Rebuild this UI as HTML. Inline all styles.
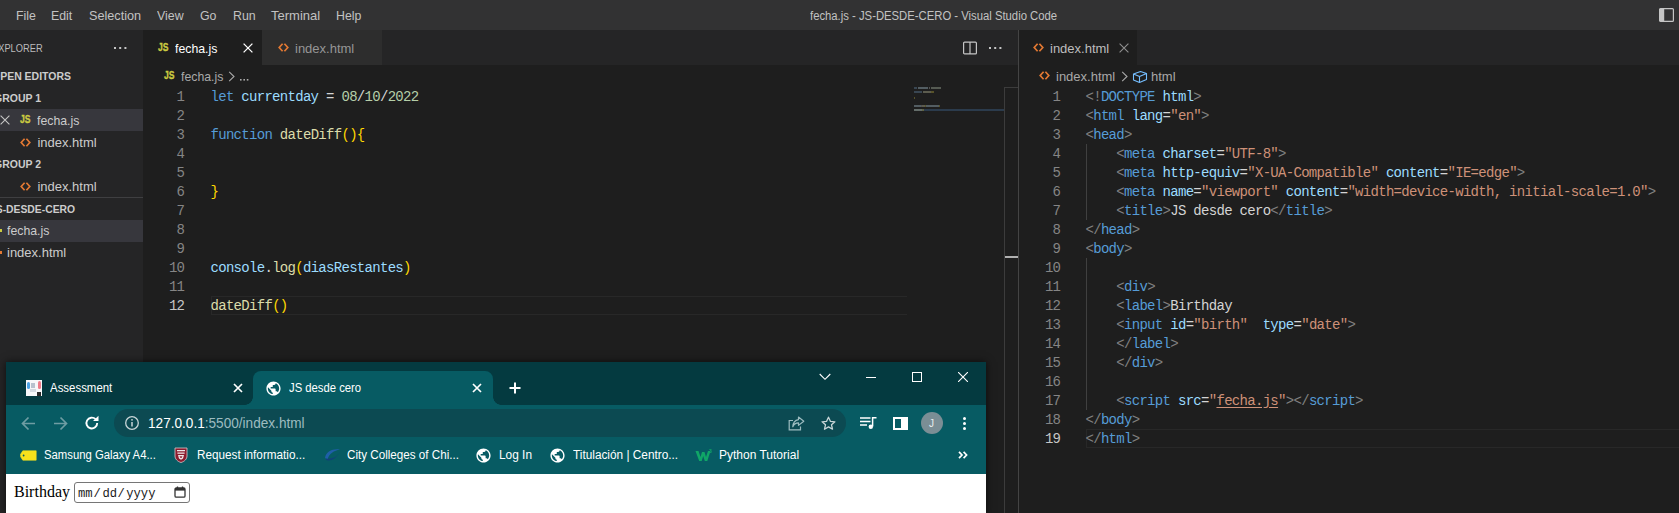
<!DOCTYPE html>
<html lang="en">
<head>
<meta charset="UTF-8">
<title>fecha.js - JS-DESDE-CERO - Visual Studio Code</title>
<style>
*{box-sizing:border-box;margin:0;padding:0}
html,body{width:1679px;height:513px;overflow:hidden;background:#1e1e1e;font-family:"Liberation Sans",sans-serif}
body{position:relative;font-family:"Liberation Sans",sans-serif;font-size:13px;color:#ccc}
.abs{position:absolute}
.t{position:absolute;white-space:nowrap;line-height:1}
/* title bar */
#titlebar{left:0;top:0;width:1679px;height:30px;background:#323233}
#titlebar .m{top:9px;font-size:13px;color:#c2c2c2}
/* sidebar */
#sidebar{left:0;top:30px;width:143px;height:483px;background:#252526;overflow:hidden}
/* editor chrome */
.tabstrip{background:#252526;height:35px;top:30px}
.tab{top:0;height:35px}
.code{font-family:"Liberation Mono",monospace;font-size:14px;letter-spacing:-0.7px;margin-top:1px;margin-left:-0.5px;white-space:pre;line-height:19px;height:19px;position:absolute}
.ln{font-family:"Liberation Mono",monospace;font-size:14px;letter-spacing:-0.7px;margin-top:1px;padding-right:0.7px;line-height:19px;height:19px;position:absolute;text-align:right;color:#858585}
.sh{font-size:11px;font-weight:bold;color:#cccccc}
.fl{font-size:13px;color:#cccccc}
.jsi{font-size:9.5px;font-weight:bold;color:#cbcb41;letter-spacing:-0.3px}
.hti{font-size:11px;font-weight:bold;color:#e37933;letter-spacing:-1.5px}
.ln.cur{color:#c6c6c6}
.kw{color:#569cd6}.vr{color:#9cdcfe}.fn{color:#dcdcaa}.nm{color:#b5cea8}.br{color:#ffd700}.wh{color:#d4d4d4}
.tg{color:#808080}.st{color:#ce9178}
</style>
</head>
<body>

<!-- ===== TITLE BAR ===== -->
<div id="titlebar" class="abs">
  <span class="t" style="left:16px;top:8.5px;font-size:13px;color:#c2c2c2;transform:scaleX(0.95);transform-origin:0 50%;">File</span>
  <span class="t" style="left:51px;top:8.5px;font-size:13px;color:#c2c2c2;transform:scaleX(0.95);transform-origin:0 50%;">Edit</span>
  <span class="t" style="left:89px;top:8.5px;font-size:13px;color:#c2c2c2;transform:scaleX(0.975);transform-origin:0 50%;">Selection</span>
  <span class="t" style="left:157px;top:8.5px;font-size:13px;color:#c2c2c2;transform:scaleX(0.95);transform-origin:0 50%;">View</span>
  <span class="t" style="left:200px;top:8.5px;font-size:13px;color:#c2c2c2;transform:scaleX(0.95);transform-origin:0 50%;">Go</span>
  <span class="t" style="left:233px;top:8.5px;font-size:13px;color:#c2c2c2;transform:scaleX(0.95);transform-origin:0 50%;">Run</span>
  <span class="t" style="left:271px;top:8.5px;font-size:13px;color:#c2c2c2;">Terminal</span>
  <span class="t" style="left:336px;top:8.5px;font-size:13px;color:#c2c2c2;transform:scaleX(0.95);transform-origin:0 50%;">Help</span>
  <span class="t" style="left:810px;top:10.0px;font-size:12px;color:#c2c2c2;transform:scaleX(0.941);transform-origin:0 50%;">fecha.js - JS-DESDE-CERO - Visual Studio Code</span>
  <svg class="abs" style="left:1659px;top:8px" width="15" height="14" viewBox="0 0 15 14"><rect x="0.6" y="0.6" width="13.8" height="12.8" rx="1" fill="none" stroke="#c5c5c5" stroke-width="1.2"/><rect x="0.6" y="0.6" width="4.6" height="12.8" fill="#c5c5c5"/></svg>
</div><!--/titlebar-->

<!-- ===== SIDEBAR ===== -->
<div id="sidebar" class="abs">
  <span class="t" style="left:-7.6px;top:13.0px;font-size:11px;color:#bbbbbb;transform:scaleX(0.845);transform-origin:0 50%;">EXPLORER</span>
  <svg class="abs" style="left:114px;top:16px" width="14" height="4" viewBox="0 0 14 4"><rect x="0" y="1" width="2" height="2" fill="#c5c5c5"/><rect x="5.2" y="1" width="2" height="2" fill="#c5c5c5"/><rect x="10.4" y="1" width="2" height="2" fill="#c5c5c5"/></svg>
  <span class="t" style="left:-8px;top:41.0px;font-size:11px;color:#cccccc;transform:scaleX(0.953);transform-origin:0 50%;font-weight:bold;">OPEN EDITORS</span>
  <span class="t" style="left:-6px;top:63.0px;font-size:11px;color:#cccccc;transform:scaleX(0.953);transform-origin:0 50%;font-weight:bold;">GROUP 1</span>
  <div class="abs" style="left:0;top:79px;width:143px;height:22px;background:#37373d"></div>
  <svg class="abs" style="left:0px;top:85px" width="10" height="10" viewBox="0 0 10 10"><path d="M0.6 0.6 L9.4 9.4 M9.4 0.6 L0.6 9.4" stroke="#c5c5c5" stroke-width="1.1" fill="none"/></svg>
  <span class="t" style="left:19.5px;top:84px;font-size:11px;font-weight:bold;color:#cbcb41;-webkit-text-stroke:0.35px #cbcb41;transform:scaleX(.78);transform-origin:0 50%">JS</span>
  <span class="t" style="left:37.4px;top:84.0px;font-size:13px;color:#cccccc;transform:scaleX(0.945);transform-origin:0 50%;">fecha.js</span>
  <svg class="abs" style="left:19.5px;top:107.5px" width="11" height="9" viewBox="0 0 11 9"><path d="M4.6 0.7 L1.2 4.5 L4.6 8.3 M6.4 0.7 L9.8 4.5 L6.4 8.3" stroke="#e37933" stroke-width="1.7" fill="none"/></svg>
  <span class="t" style="left:37.4px;top:106.0px;font-size:13px;color:#cccccc;">index.html</span>
  <span class="t" style="left:-6px;top:129.0px;font-size:11px;color:#cccccc;transform:scaleX(0.953);transform-origin:0 50%;font-weight:bold;">GROUP 2</span>
  <svg class="abs" style="left:19.5px;top:151.5px" width="11" height="9" viewBox="0 0 11 9"><path d="M4.6 0.7 L1.2 4.5 L4.6 8.3 M6.4 0.7 L9.8 4.5 L6.4 8.3" stroke="#e37933" stroke-width="1.7" fill="none"/></svg>
  <span class="t" style="left:37.4px;top:150.0px;font-size:13px;color:#cccccc;">index.html</span>
  <div class="abs" style="left:0;top:167px;width:143px;height:1px;background:#3f3f41"></div>
  <span class="t" style="left:-10px;top:174.0px;font-size:11px;color:#cccccc;transform:scaleX(0.94);transform-origin:0 50%;font-weight:bold;">JS-DESDE-CERO</span>
  <div class="abs" style="left:0;top:190px;width:143px;height:22px;background:#37373d"></div>
  <div class="abs" style="left:0;top:199px;width:1.5px;height:3px;background:#cbcb41"></div>
  <span class="t" style="left:7px;top:194.0px;font-size:13px;color:#cccccc;transform:scaleX(0.945);transform-origin:0 50%;">fecha.js</span>
  <div class="abs" style="left:0;top:221px;width:1.5px;height:3px;background:#e37933"></div>
  <span class="t" style="left:7px;top:216.0px;font-size:13px;color:#cccccc;">index.html</span>
</div><!--/sidebar-->

<!-- ===== LEFT EDITOR GROUP ===== -->
<div id="left" class="abs" style="left:143px;top:30px;width:875px;height:483px;background:#1e1e1e">
  <div class="abs tabstrip" style="left:0;top:0;width:876px"></div>
  <div class="abs tab" style="left:0;width:119px;background:#1e1e1e"></div>
  <div class="abs tab" style="left:119px;width:120px;background:#2d2d2d"></div>
  <span class="t" style="left:15px;top:12px;font-size:11px;font-weight:bold;color:#cbcb41;-webkit-text-stroke:0.35px #cbcb41;transform:scaleX(.78);transform-origin:0 50%">JS</span>
  <span class="t" style="left:32px;top:12.0px;font-size:13px;color:#ffffff;transform:scaleX(0.945);transform-origin:0 50%;">fecha.js</span>
  <svg class="abs" style="left:100px;top:13px" width="10" height="10" viewBox="0 0 10 10"><path d="M0.6 0.6 L9.4 9.4 M9.4 0.6 L0.6 9.4" stroke="#ffffff" stroke-width="1.3" fill="none"/></svg>
  <svg class="abs" style="left:135px;top:13.0px" width="11" height="9" viewBox="0 0 11 9"><path d="M4.6 0.7 L1.2 4.5 L4.6 8.3 M6.4 0.7 L9.8 4.5 L6.4 8.3" stroke="#e37933" stroke-width="1.7" fill="none"/></svg>
  <span class="t" style="left:152px;top:12.0px;font-size:13px;color:#969696;">index.html</span>
  <svg class="abs" style="left:819px;top:10px" width="16" height="16" viewBox="0 0 16 16"><rect x="1.6" y="2.1" width="12.8" height="11.8" rx="1" fill="none" stroke="#c5c5c5" stroke-width="1.2"/><path d="M8 2 V14" stroke="#c5c5c5" stroke-width="1.2"/></svg>
  <svg class="abs" style="left:845.5px;top:16px" width="14" height="4" viewBox="0 0 14 4"><rect x="0" y="1" width="2" height="2" fill="#c5c5c5"/><rect x="5.2" y="1" width="2" height="2" fill="#c5c5c5"/><rect x="10.4" y="1" width="2" height="2" fill="#c5c5c5"/></svg>
  <span class="t" style="left:21px;top:40px;font-size:11px;font-weight:bold;color:#cbcb41;-webkit-text-stroke:0.35px #cbcb41;transform:scaleX(.78);transform-origin:0 50%">JS</span>
  <span class="t" style="left:38px;top:40.0px;font-size:13px;color:#a9a9a9;transform:scaleX(0.945);transform-origin:0 50%;">fecha.js</span>
  <svg class="abs" style="left:85px;top:40.5px" width="8" height="11" viewBox="0 0 8 11"><path d="M1.2 0.8 L6 5.5 L1.2 10.2" stroke="#a9a9a9" stroke-width="1.1" fill="none"/></svg>
  <svg class="abs" style="left:97px;top:48px" width="14" height="4" viewBox="0 0 14 4"><rect x="0" y="1" width="1.6" height="1.6" fill="#a9a9a9"/><rect x="3.4" y="1" width="1.6" height="1.6" fill="#a9a9a9"/><rect x="6.8" y="1" width="1.6" height="1.6" fill="#a9a9a9"/></svg>
  <div class="abs" style="left:68px;top:266px;width:696px;height:19px;border:1px solid #282828;border-right:none"></div>
  <span class="ln" style="left:0;width:42px;top:57px">1</span>
  <span class="code" style="left:68px;top:57px"><span class="kw">let</span> <span class="vr">currentday</span> <span class="wh">=</span> <span class="nm">08</span><span class="wh">/</span><span class="nm">10</span><span class="wh">/</span><span class="nm">2022</span></span>
  <span class="ln" style="left:0;width:42px;top:76px">2</span>
  <span class="ln" style="left:0;width:42px;top:95px">3</span>
  <span class="code" style="left:68px;top:95px"><span class="kw">function</span> <span class="fn">dateDiff</span><span class="br">(){</span></span>
  <span class="ln" style="left:0;width:42px;top:114px">4</span>
  <span class="ln" style="left:0;width:42px;top:133px">5</span>
  <span class="ln" style="left:0;width:42px;top:152px">6</span>
  <span class="code" style="left:68px;top:152px"><span class="br">}</span></span>
  <span class="ln" style="left:0;width:42px;top:171px">7</span>
  <span class="ln" style="left:0;width:42px;top:190px">8</span>
  <span class="ln" style="left:0;width:42px;top:209px">9</span>
  <span class="ln" style="left:0;width:42px;top:228px">10</span>
  <span class="code" style="left:68px;top:228px"><span class="vr">console</span><span class="wh">.</span><span class="fn">log</span><span class="br">(</span><span class="vr">diasRestantes</span><span class="br">)</span></span>
  <span class="ln" style="left:0;width:42px;top:247px">11</span>
  <span class="ln cur" style="left:0;width:42px;top:266px">12</span>
  <span class="code" style="left:68px;top:266px"><span class="fn">dateDiff</span><span class="br">()</span></span>
  <div class="abs" style="left:771px;top:79px;width:90px;height:2px;background:#2b3b4c"></div>
  <div class="abs" style="left:771px;top:57.3px;width:3px;height:1.3px;background:#5f7f9a;opacity:.42"></div>
  <div class="abs" style="left:775px;top:57.3px;width:10px;height:1.3px;background:#9db4c2;opacity:.42"></div>
  <div class="abs" style="left:786px;top:57.3px;width:1px;height:1.3px;background:#9a9a9a;opacity:.42"></div>
  <div class="abs" style="left:788px;top:57.3px;width:10px;height:1.3px;background:#a3ad9c;opacity:.42"></div>
  <div class="abs" style="left:771px;top:61.3px;width:8px;height:1.3px;background:#5f7f9a;opacity:.42"></div>
  <div class="abs" style="left:780px;top:61.3px;width:8px;height:1.3px;background:#b3b394;opacity:.42"></div>
  <div class="abs" style="left:788px;top:61.3px;width:3px;height:1.3px;background:#a89a3a;opacity:.42"></div>
  <div class="abs" style="left:771px;top:67.3px;width:1px;height:1.3px;background:#a89a3a;opacity:.42"></div>
  <div class="abs" style="left:771px;top:75.3px;width:7px;height:1.3px;background:#9db4c2;opacity:.42"></div>
  <div class="abs" style="left:778px;top:75.3px;width:1px;height:1.3px;background:#9a9a9a;opacity:.42"></div>
  <div class="abs" style="left:779px;top:75.3px;width:3px;height:1.3px;background:#b3b394;opacity:.42"></div>
  <div class="abs" style="left:782px;top:75.3px;width:1px;height:1.3px;background:#a89a3a;opacity:.42"></div>
  <div class="abs" style="left:783px;top:75.3px;width:13px;height:1.3px;background:#9db4c2;opacity:.42"></div>
  <div class="abs" style="left:796px;top:75.3px;width:1px;height:1.3px;background:#a89a3a;opacity:.42"></div>
  <div class="abs" style="left:771px;top:79.3px;width:8px;height:1.3px;background:#b3b394;opacity:.42"></div>
  <div class="abs" style="left:779px;top:79.3px;width:2px;height:1.3px;background:#a89a3a;opacity:.42"></div>
  <div class="abs" style="left:861px;top:57px;width:14px;height:426px;border-left:1px solid #3c3c3c;border-top:1px solid #3c3c3c"></div>
  <div class="abs" style="left:862px;top:226px;width:13px;height:2px;background:#b0b0b0"></div>
</div><!--/left-->

<!-- ===== RIGHT EDITOR GROUP ===== -->
<div id="right" class="abs" style="left:1018px;top:30px;width:661px;height:483px;background:#1e1e1e;border-left:1px solid #444">
  <div class="abs tabstrip" style="left:0;top:0;width:660px"></div>
  <div class="abs tab" style="left:0;width:118px;background:#1e1e1e"></div>
  <svg class="abs" style="left:14px;top:13.0px" width="11" height="9" viewBox="0 0 11 9"><path d="M4.6 0.7 L1.2 4.5 L4.6 8.3 M6.4 0.7 L9.8 4.5 L6.4 8.3" stroke="#e37933" stroke-width="1.7" fill="none"/></svg>
  <span class="t" style="left:31px;top:12.0px;font-size:13px;color:#bdbdbd;">index.html</span>
  <svg class="abs" style="left:99.5px;top:13.200000000000003px" width="10" height="10" viewBox="0 0 10 10"><path d="M0.6 0.6 L9.4 9.4 M9.4 0.6 L0.6 9.4" stroke="#8f8f8f" stroke-width="1.1" fill="none"/></svg>
  <svg class="abs" style="left:20px;top:41.0px" width="11" height="9" viewBox="0 0 11 9"><path d="M4.6 0.7 L1.2 4.5 L4.6 8.3 M6.4 0.7 L9.8 4.5 L6.4 8.3" stroke="#e37933" stroke-width="1.7" fill="none"/></svg>
  <span class="t" style="left:37px;top:40.0px;font-size:13px;color:#a9a9a9;">index.html</span>
  <svg class="abs" style="left:101.5px;top:40.5px" width="8" height="11" viewBox="0 0 8 11"><path d="M1.2 0.8 L6 5.5 L1.2 10.2" stroke="#a9a9a9" stroke-width="1.1" fill="none"/></svg>
  <svg class="abs" style="left:113px;top:38.5px" width="16" height="16" viewBox="0 0 16 16"><path d="M1.5 5 L8.5 2.5 L14.5 4.5 L14.5 10.5 L7.5 13.5 L1.5 11 Z M1.5 5 L7.5 7.5 L14.5 4.5 M7.5 7.5 V13.5" fill="none" stroke="#75beff" stroke-width="1.1" stroke-linejoin="round"/></svg>
  <span class="t" style="left:132px;top:40.0px;font-size:13px;color:#a9a9a9;">html</span>
  <div class="abs" style="left:67px;top:114px;width:1px;height:76px;background:#404040"></div>
  <div class="abs" style="left:67px;top:228px;width:1px;height:152px;background:#404040"></div>
  <div class="abs" style="left:67px;top:399px;width:593px;height:19px;border:1px solid #282828;border-right:none"></div>
  <span class="ln" style="left:0;width:42px;top:57px">1</span>
  <span class="code" style="left:67px;top:57px"><span class="tg">&lt;!</span><span class="kw">DOCTYPE</span> <span class="vr">html</span><span class="tg">&gt;</span></span>
  <span class="ln" style="left:0;width:42px;top:76px">2</span>
  <span class="code" style="left:67px;top:76px"><span class="tg">&lt;</span><span class="kw">html</span> <span class="vr">lang</span><span class="wh">=</span><span class="st">"en"</span><span class="tg">&gt;</span></span>
  <span class="ln" style="left:0;width:42px;top:95px">3</span>
  <span class="code" style="left:67px;top:95px"><span class="tg">&lt;</span><span class="kw">head</span><span class="tg">&gt;</span></span>
  <span class="ln" style="left:0;width:42px;top:114px">4</span>
  <span class="code" style="left:67px;top:114px">    <span class="tg">&lt;</span><span class="kw">meta</span> <span class="vr">charset</span><span class="wh">=</span><span class="st">"UTF-8"</span><span class="tg">&gt;</span></span>
  <span class="ln" style="left:0;width:42px;top:133px">5</span>
  <span class="code" style="left:67px;top:133px">    <span class="tg">&lt;</span><span class="kw">meta</span> <span class="vr">http-equiv</span><span class="wh">=</span><span class="st">"X-UA-Compatible"</span> <span class="vr">content</span><span class="wh">=</span><span class="st">"IE=edge"</span><span class="tg">&gt;</span></span>
  <span class="ln" style="left:0;width:42px;top:152px">6</span>
  <span class="code" style="left:67px;top:152px">    <span class="tg">&lt;</span><span class="kw">meta</span> <span class="vr">name</span><span class="wh">=</span><span class="st">"viewport"</span> <span class="vr">content</span><span class="wh">=</span><span class="st">"width=device-width, initial-scale=1.0"</span><span class="tg">&gt;</span></span>
  <span class="ln" style="left:0;width:42px;top:171px">7</span>
  <span class="code" style="left:67px;top:171px">    <span class="tg">&lt;</span><span class="kw">title</span><span class="tg">&gt;</span><span class="wh">JS desde cero</span><span class="tg">&lt;/</span><span class="kw">title</span><span class="tg">&gt;</span></span>
  <span class="ln" style="left:0;width:42px;top:190px">8</span>
  <span class="code" style="left:67px;top:190px"><span class="tg">&lt;/</span><span class="kw">head</span><span class="tg">&gt;</span></span>
  <span class="ln" style="left:0;width:42px;top:209px">9</span>
  <span class="code" style="left:67px;top:209px"><span class="tg">&lt;</span><span class="kw">body</span><span class="tg">&gt;</span></span>
  <span class="ln" style="left:0;width:42px;top:228px">10</span>
  <span class="ln" style="left:0;width:42px;top:247px">11</span>
  <span class="code" style="left:67px;top:247px">    <span class="tg">&lt;</span><span class="kw">div</span><span class="tg">&gt;</span></span>
  <span class="ln" style="left:0;width:42px;top:266px">12</span>
  <span class="code" style="left:67px;top:266px">    <span class="tg">&lt;</span><span class="kw">label</span><span class="tg">&gt;</span><span class="wh">Birthday</span></span>
  <span class="ln" style="left:0;width:42px;top:285px">13</span>
  <span class="code" style="left:67px;top:285px">    <span class="tg">&lt;</span><span class="kw">input</span> <span class="vr">id</span><span class="wh">=</span><span class="st">"birth"</span>  <span class="vr">type</span><span class="wh">=</span><span class="st">"date"</span><span class="tg">&gt;</span></span>
  <span class="ln" style="left:0;width:42px;top:304px">14</span>
  <span class="code" style="left:67px;top:304px">    <span class="tg">&lt;/</span><span class="kw">label</span><span class="tg">&gt;</span></span>
  <span class="ln" style="left:0;width:42px;top:323px">15</span>
  <span class="code" style="left:67px;top:323px">    <span class="tg">&lt;/</span><span class="kw">div</span><span class="tg">&gt;</span></span>
  <span class="ln" style="left:0;width:42px;top:342px">16</span>
  <span class="ln" style="left:0;width:42px;top:361px">17</span>
  <span class="code" style="left:67px;top:361px">    <span class="tg">&lt;</span><span class="kw">script</span> <span class="vr">src</span><span class="wh">=</span><span class="st">"<span style="text-decoration:underline;text-underline-offset:2px">fecha.js</span>"</span><span class="tg">&gt;</span><span class="tg">&lt;/</span><span class="kw">script</span><span class="tg">&gt;</span></span>
  <span class="ln" style="left:0;width:42px;top:380px">18</span>
  <span class="code" style="left:67px;top:380px"><span class="tg">&lt;/</span><span class="kw">body</span><span class="tg">&gt;</span></span>
  <span class="ln cur" style="left:0;width:42px;top:399px">19</span>
  <span class="code" style="left:67px;top:399px"><span class="tg">&lt;/</span><span class="kw">html</span><span class="tg">&gt;</span></span>
</div><!--/right-->

<!-- ===== CHROME WINDOW ===== -->
<div id="chrome" class="abs" style="left:6px;top:362px;width:980px;height:151px;background:#043a40;box-shadow:0 0 8px rgba(0,0,0,.65)">
  <div class="abs" style="left:0;top:43px;width:980px;height:69px;background:#075b63"></div>
  <div class="abs" style="left:247px;top:9px;width:240px;height:34px;background:#075b63;border-radius:8px 8px 0 0"></div>
  <div class="abs" style="left:239px;top:35px;width:8px;height:8px;background:radial-gradient(circle at 0 0,#043a40 7.5px,#075b63 8px)"></div>
  <div class="abs" style="left:487px;top:35px;width:8px;height:8px;background:radial-gradient(circle at 100% 0,#043a40 7.5px,#075b63 8px)"></div>
  <div class="abs" style="left:20px;top:18px;width:16px;height:16px;background:#f7f8fa;overflow:hidden"><div class="abs" style="left:1px;top:2px;width:3px;height:7px;background:#4aa3e6;border-radius:1.5px"></div><div class="abs" style="left:5px;top:3px;width:4px;height:5px;background:#b9c3cf"></div><div class="abs" style="left:4px;top:9px;width:6px;height:3px;background:#d5dbe2"></div><div class="abs" style="left:12px;top:1px;width:3px;height:8px;background:#ef7d8a;border-radius:1.5px"></div><div class="abs" style="left:11px;top:12px;width:4px;height:4px;background:#2a2a2a"></div></div>
  <span class="t" style="left:44px;top:19.5px;font-size:12px;color:#fff;transform:scaleX(0.953);transform-origin:0 50%;">Assessment</span>
  <svg class="abs" style="left:227px;top:21px" width="10" height="10" viewBox="0 0 10 10"><path d="M1 1 L9 9 M9 1 L1 9" stroke="#fff" stroke-width="1.7" fill="none"/></svg>
  <svg class="abs" style="left:258.5px;top:17.5px" width="17" height="17" viewBox="0 0 24 24"><path fill="#fff" d="M12 2C6.48 2 2 6.48 2 12s4.480 10 10 10 10-4.480 10-10S17.520 2 12 2zm-1 17.930c-3.950-.490-7-3.850-7-7.930 0-.620.080-1.210.210-1.790L9 15v1c0 1.100.900 2 2 2v1.930zm6.900-2.540c-.260-.810-1-1.390-1.900-1.390h-1v-3c0-.550-.450-1-1-1H8v-2h2c.550 0 1-.450 1-1V7h2c1.100 0 2-.900 2-2v-.410c2.930 1.190 5 4.060 5 7.410 0 2.080-.800 3.970-2.100 5.390z"/></svg>
  <span class="t" style="left:283px;top:19.5px;font-size:12px;color:#fff;transform:scaleX(0.94);transform-origin:0 50%;">JS desde cero</span>
  <svg class="abs" style="left:466px;top:21px" width="10" height="10" viewBox="0 0 10 10"><path d="M1 1 L9 9 M9 1 L1 9" stroke="#fff" stroke-width="1.7" fill="none"/></svg>
  <svg class="abs" style="left:503px;top:20px" width="12" height="12" viewBox="0 0 12 12"><path d="M6 0.5 V11.5 M0.5 6 H11.5" stroke="#fff" stroke-width="2" fill="none"/></svg>
  <svg class="abs" style="left:813px;top:11px" width="12" height="8" viewBox="0 0 12 8"><path d="M0.7 1 L6 6.3 L11.3 1" stroke="#fff" stroke-width="1.1" fill="none"/></svg>
  <div class="abs" style="left:860px;top:15px;width:10px;height:1px;background:#fff"></div>
  <div class="abs" style="left:906px;top:10px;width:10px;height:10px;border:1px solid #fff"></div>
  <svg class="abs" style="left:952px;top:10px" width="10" height="10" viewBox="0 0 10 10"><path d="M0 0 L10 10 M10 0 L0 10" stroke="#fff" stroke-width="1.1" fill="none"/></svg>
  <svg class="abs" style="left:15px;top:54px" width="15" height="15" viewBox="0 0 15 15"><path d="M14 7.5 H2 M7.5 1.5 L1.5 7.5 L7.5 13.5" stroke="#6f9da3" stroke-width="1.7" fill="none"/></svg>
  <svg class="abs" style="left:47px;top:54px;transform:scaleX(-1)" width="15" height="15" viewBox="0 0 15 15"><path d="M14 7.5 H2 M7.5 1.5 L1.5 7.5 L7.5 13.5" stroke="#6f9da3" stroke-width="1.7" fill="none"/></svg>
  <svg class="abs" style="left:78px;top:53px" width="16" height="16" viewBox="0 0 16 16"><path d="M13.2 8 A5.4 5.4 0 1 1 11.6 4.2" stroke="#fff" stroke-width="1.9" fill="none"/><path d="M9 6 H14.5 V0.8 Z" fill="#fff"/></svg>
  <div class="abs" style="left:108px;top:47px;width:732px;height:28px;border-radius:14px;background:#0c4a52"></div>
  <svg class="abs" style="left:118px;top:53px" width="16" height="16" viewBox="0 0 16 16"><circle cx="8" cy="8" r="6.3" stroke="#c8d6d8" stroke-width="1.3" fill="none"/><path d="M8 7 V11.5" stroke="#c8d6d8" stroke-width="1.5"/><circle cx="8" cy="4.8" r="0.9" fill="#c8d6d8"/></svg>
  <span class="t" style="left:142px;top:53.5px;font-size:14px;color:#fff;transform:scaleX(0.972);transform-origin:0 50%;">127.0.0.1<span style="color:#9dbcc0">:5500/index.html</span></span>
  <svg class="abs" style="left:782px;top:54px" width="17" height="15" viewBox="0 0 17 15"><path d="M5 4.5 H1.2 V13.8 H12.5 V10.5" stroke="#9dbcc0" stroke-width="1.2" fill="none"/><path d="M10.5 1 L15.8 5.2 L10.5 9.4 V6.8 C7.5 6.8 5.8 8 4.8 10.8 C5 7 7 4.2 10.5 3.6 Z" stroke="#9dbcc0" stroke-width="1.2" fill="none" stroke-linejoin="round"/></svg>
  <svg class="abs" style="left:815px;top:54px" width="15" height="14" viewBox="0 0 15 14"><path d="M7.5 1.2 L9.4 5.3 L13.9 5.8 L10.5 8.8 L11.5 13.2 L7.5 10.9 L3.5 13.2 L4.5 8.8 L1.1 5.8 L5.6 5.3 Z" stroke="#c8d6d8" stroke-width="1.3" fill="none" stroke-linejoin="round"/></svg>
  <svg class="abs" style="left:854px;top:55px" width="17" height="13" viewBox="0 0 17 13"><path d="M0 1 H10.5 M0 4.5 H10.5 M0 8 H7" stroke="#fff" stroke-width="1.5"/><path d="M12.6 9.5 V0.8 H16.5" stroke="#fff" stroke-width="1.5" fill="none"/><circle cx="10.8" cy="9.8" r="2.2" fill="#fff"/></svg>
  <div class="abs" style="left:887px;top:55px;width:15px;height:13px;border:2px solid #fff"><div class="abs" style="right:0;top:0;width:5px;height:9px;background:#fff"></div></div>
  <div class="abs" style="left:915px;top:50px;width:22px;height:22px;border-radius:11px;background:#7b8e95"></div>
  <span class="t" style="left:923px;top:56.5px;font-size:10px;color:#e8eef0;transform:scaleX(1);transform-origin:0 50%;">J</span>
  <div class="abs" style="left:957px;top:55.3px;width:2.6px;height:2.6px;border-radius:2px;background:#fff"></div>
  <div class="abs" style="left:957px;top:60.3px;width:2.6px;height:2.6px;border-radius:2px;background:#fff"></div>
  <div class="abs" style="left:957px;top:65.3px;width:2.6px;height:2.6px;border-radius:2px;background:#fff"></div>
  <svg class="abs" style="left:14px;top:88px" width="17" height="11" viewBox="0 0 17 11"><path d="M0.6 4.2 L2.8 0.8 H16.2 V10.2 H2.8 L0.6 6.8 Z" fill="#f7e21c" stroke="#f7e21c" stroke-width="0.6" stroke-linejoin="round"/><circle cx="3.6" cy="5.5" r="0.9" fill="#075b63"/></svg>
  <span class="t" style="left:38px;top:86.5px;font-size:12px;color:#fff;transform:scaleX(0.942);transform-origin:0 50%;">Samsung Galaxy A4...</span>
  <svg class="abs" style="left:168px;top:85px" width="14" height="16" viewBox="0 0 14 16"><path d="M1 1 H13 V9 C13 12 10.5 14.5 7 15.5 C3.5 14.5 1 12 1 9 Z" fill="#8c1d2f" stroke="#d9c8cb" stroke-width="0.8"/><path d="M3 3.6 H11 M3.4 6.2 H10.6" stroke="#efe6e7" stroke-width="1.3" fill="none"/><path d="M4 8 H10 L9 11.5 L7 12.8 L5 11.5 Z" fill="#efe6e7"/><path d="M6 9 L7 11 L8 9" stroke="#8c1d2f" stroke-width="0.9" fill="none"/></svg>
  <span class="t" style="left:191px;top:86.5px;font-size:12px;color:#fff;transform:scaleX(0.978);transform-origin:0 50%;">Request informatio...</span>
  <svg class="abs" style="left:318px;top:85px" width="17" height="16" viewBox="0 0 17 16"><path d="M1 11 C2 5 8 1.5 16 2.5 C10 3.5 5 6.5 3.5 12.5 Z" fill="#1f5fa8"/><path d="M2 13 C6 14.5 12 12 15.5 5.5 C13 10 8 12.5 2 11.5 Z" fill="#123f7a"/></svg>
  <span class="t" style="left:341px;top:86.5px;font-size:12px;color:#fff;transform:scaleX(0.97);transform-origin:0 50%;">City Colleges of Chi...</span>
  <svg class="abs" style="left:468.5px;top:84.5px" width="17" height="17" viewBox="0 0 24 24"><path fill="#fff" d="M12 2C6.48 2 2 6.48 2 12s4.480 10 10 10 10-4.480 10-10S17.520 2 12 2zm-1 17.930c-3.950-.490-7-3.850-7-7.930 0-.620.080-1.210.210-1.790L9 15v1c0 1.100.900 2 2 2v1.930zm6.900-2.540c-.260-.810-1-1.390-1.900-1.390h-1v-3c0-.550-.450-1-1-1H8v-2h2c.550 0 1-.450 1-1V7h2c1.100 0 2-.900 2-2v-.410c2.930 1.190 5 4.060 5 7.410 0 2.080-.800 3.970-2.100 5.390z"/></svg>
  <span class="t" style="left:493px;top:86.5px;font-size:12px;color:#fff;transform:scaleX(0.99);transform-origin:0 50%;">Log In</span>
  <svg class="abs" style="left:542.5px;top:84.5px" width="17" height="17" viewBox="0 0 24 24"><path fill="#fff" d="M12 2C6.48 2 2 6.48 2 12s4.480 10 10 10 10-4.480 10-10S17.520 2 12 2zm-1 17.930c-3.950-.490-7-3.850-7-7.930 0-.620.080-1.210.210-1.790L9 15v1c0 1.100.900 2 2 2v1.930zm6.900-2.540c-.260-.810-1-1.390-1.900-1.390h-1v-3c0-.550-.450-1-1-1H8v-2h2c.550 0 1-.450 1-1V7h2c1.100 0 2-.900 2-2v-.410c2.930 1.190 5 4.060 5 7.410 0 2.080-.800 3.970-2.100 5.390z"/></svg>
  <span class="t" style="left:567px;top:86.5px;font-size:12px;color:#fff;transform:scaleX(0.985);transform-origin:0 50%;">Titulación | Centro...</span>
  <svg class="abs" style="left:689px;top:86px" width="18" height="14" viewBox="0 0 18 14"><path d="M0.5 3 H3.5 L5.5 9 L7 4 H9.5 L11 9 L13 3 H15.5 L12.3 13 H9.8 L8.2 8 L6.7 13 H4.2 Z" fill="#10a567"/><text x="14" y="4.5" font-size="5" font-family="Liberation Sans" font-weight="bold" fill="#10a567">3</text></svg>
  <span class="t" style="left:713px;top:86.5px;font-size:12px;color:#fff;transform:scaleX(1.0);transform-origin:0 50%;">Python Tutorial</span>
  <svg class="abs" style="left:952px;top:89px" width="10" height="8" viewBox="0 0 10 8"><path d="M1 0.8 L4 4 L1 7.2 M5.6 0.8 L8.6 4 L5.6 7.2" stroke="#fff" stroke-width="1.7" fill="none"/></svg>
  <div class="abs" style="left:0;top:112px;width:980px;height:39px;background:#fff"></div>
  <span class="t" style="left:8px;top:120px;font-family:'Liberation Serif',serif;font-size:16px;color:#000;line-height:19px">Birthday</span>
  <div class="abs" style="left:68px;top:120px;width:116px;height:21px;border:1px solid #767676;border-radius:3px;background:#fff"></div>
  <span class="t" style="left:72px;top:125px;font-family:'Liberation Mono',monospace;font-size:12.2px;color:#1a1a1a;line-height:14px">mm</span>
  <span class="t" style="left:87.6px;top:125px;font-family:'Liberation Mono',monospace;font-size:12.2px;color:#1a1a1a;line-height:14px">/</span>
  <span class="t" style="left:96.4px;top:125px;font-family:'Liberation Mono',monospace;font-size:12.2px;color:#1a1a1a;line-height:14px">dd</span>
  <span class="t" style="left:111.4px;top:125px;font-family:'Liberation Mono',monospace;font-size:12.2px;color:#1a1a1a;line-height:14px">/</span>
  <span class="t" style="left:120.2px;top:125px;font-family:'Liberation Mono',monospace;font-size:12.2px;color:#1a1a1a;line-height:14px">yyyy</span>
  <svg class="abs" style="left:168px;top:124px" width="12" height="12" viewBox="0 0 12 12"><rect x="1" y="2" width="10" height="9.2" rx="1.2" fill="none" stroke="#333" stroke-width="1.3"/><rect x="1" y="2" width="10" height="2.6" fill="#333"/><path d="M3.5 0.6 V2.4 M8.5 0.6 V2.4" stroke="#333" stroke-width="1.3"/></svg>
</div><!--/chrome-->

</body>
</html>
